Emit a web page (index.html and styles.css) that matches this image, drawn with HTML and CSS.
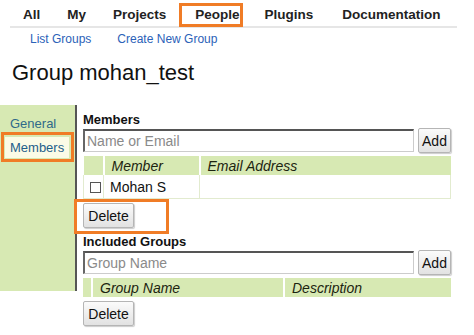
FILE: index.html
```html
<!DOCTYPE html>
<html lang="en">
<head>
    <meta charset="UTF-8">
    <title>Group mohan_test</title>
    <link rel="stylesheet" href="styles.css">
</head>
<body>
    <div class="topnav">
        <a class="nav-item">All</a>
        <a class="nav-item">My</a>
        <a class="nav-item">Projects</a>
        <a class="nav-item marked">People</a>
        <a class="nav-item">Plugins</a>
        <a class="nav-item">Documentation</a>
    </div>
    <div class="subnav">
        <a>List Groups</a>
        <a>Create New Group</a>
    </div>
    <h1 class="title">Group mohan_test</h1>

    <div class="layout">
        <div class="sidebar">
            <a class="side-link">General</a>
            <a class="side-link active">Members</a>
        </div>
        <div class="main">
            <div class="section-title">Members</div>
            <div class="add-row">
                <input class="text-input" type="text" placeholder="Name or Email">
                <button class="btn">Add</button>
            </div>
            <table class="grid">
                <tr>
                    <th class="check-col"></th>
                    <th class="member-col">Member</th>
                    <th>Email Address</th>
                </tr>
                <tr>
                    <td class="check-cell"><span class="checkbox"></span></td>
                    <td class="name-cell">Mohan S</td>
                    <td></td>
                </tr>
            </table>
            <div class="delete-row marked-box">
                <button class="btn">Delete</button>
            </div>

            <div class="section-title">Included Groups</div>
            <div class="add-row">
                <input class="text-input" type="text" placeholder="Group Name">
                <button class="btn">Add</button>
            </div>
            <table class="grid">
                <tr>
                    <th class="narrow-col"></th>
                    <th class="group-col">Group Name</th>
                    <th>Description</th>
                </tr>
            </table>
            <div class="delete-row">
                <button class="btn">Delete</button>
            </div>
        </div>
    </div>
</body>
</html>
```

FILE: styles.css
```css
body {
    font-family: "Liberation Sans", Arial, sans-serif;
    margin: 0;
    background-color: #fff;
    color: #111;
}
a {
    cursor: pointer;
}
.topnav {
    display: flex;
    margin: 0 17px 0 10px;
    padding-top: 4px;
    height: 22px;
    border-bottom: 2px solid #e6e6e6;
    align-items: center;
}
.nav-item {
    display: block;
    font-size: 13.5px;
    line-height: 16px;
    font-weight: bold;
    color: #222;
    padding: 0 13px;
    margin-right: 1px;
}
.nav-item:nth-child(3) {
    margin-right: 0;
}
.nav-item:nth-child(4) {
    padding: 0 11px 0 16px;
}
.nav-item:nth-child(5) {
    margin-right: 3px;
}
.marked {
    position: relative;
}
/* orange annotation frame */
.marked::after {
    content: "";
    position: absolute;
    left: 0;
    right: 8px;
    top: -4px;
    bottom: -4px;
    border: 3px solid #f07c26;
}
.subnav {
    display: flex;
    gap: 26px;
    padding: 4px 0 0 30px;
    font-size: 12px;
    height: 16px;
}
.subnav a {
    color: #2b62b8;
}
.title {
    font-size: 22px;
    font-weight: normal;
    margin: 12px 0 0 12px;
    color: #111;
    height: 45px;
}
.layout {
    display: flex;
    align-items: flex-start;
}
.sidebar {
    width: 77px;
    height: 186px;
    background-color: #d7e9b3;
    border-right: 2px solid #555;
    padding-top: 9px;
    box-sizing: border-box;
    display: flex;
    flex-direction: column;
}
.side-link {
    font-size: 13px;
    color: #2f6a8a;
    padding: 2px 0 2px 10px;
}
.side-link.active {
    position: relative;
    background-color: #fbfbe6;
    margin: 4px 6px 0 5px;
    padding: 3px 0 3px 5px;
    color: #1f5f8a;
}
.side-link.active::after {
    content: "";
    position: absolute;
    left: -4px;
    right: -5px;
    top: -5px;
    bottom: -4px;
    border: 3px solid #f07c26;
}
.main {
    margin-left: 6px;
    width: 368px;
    padding-top: 7px;
}
.section-title {
    font-size: 13px;
    font-weight: bold;
    color: #111;
    height: 16px;
}
.add-row {
    display: flex;
    align-items: center;
    gap: 4px;
}
.text-input {
    width: 331px;
    height: 23px;
    box-sizing: border-box;
    border: 1px solid #ccc;
    border-top: 2px solid #555;
    border-left: 2px solid #666;
    font-family: "Liberation Sans", Arial, sans-serif;
    font-size: 14px;
    padding: 0 2px;
    margin: 0;
}
.text-input::placeholder {
    color: #8a8a8a;
}
.btn {
    font-family: "Liberation Sans", Arial, sans-serif;
    font-size: 14px;
    color: #111;
    height: 25px;
    padding: 0 5px;
    border: 1px solid #b5b5b5;
    border-radius: 2px;
    background: linear-gradient(#fbfbfb, #e2e2e2);
    box-shadow: 1px 1px 1px rgba(0, 0, 0, 0.2);
    margin: 0;
}
.add-row .btn {
    width: 33px;
    padding: 0;
}
.grid {
    width: 368px;
    table-layout: fixed;
    border-collapse: collapse;
    margin-top: 3px;
    font-size: 14px;
}
.grid th {
    background-color: #d7e9b3;
    font-style: italic;
    font-weight: normal;
    text-align: left;
    height: 19px;
    padding: 0 0 0 7px;
    border-left: 2px solid #fff;
    color: #1c2410;
}
.grid th:first-child {
    border-left: none;
}
.grid td {
    height: 23px;
    padding: 0;
    border: 1px solid #e2ebcf;
    border-top: none;
}
.check-col {
    width: 12px;
}
.grid th.member-col {
    width: 87px;
}
.narrow-col {
    width: 1px;
}
.grid th.group-col {
    width: 183px;
}
.grid td.check-cell {
    padding-left: 6px;
}
.grid td.name-cell {
    padding-left: 6px;
}
.checkbox {
    display: inline-block;
    width: 9px;
    height: 9px;
    border: 1px solid #555;
    background-color: #fff;
    vertical-align: middle;
}
.delete-row {
    padding: 4px 0 0 0;
    height: 31px;
}
.delete-row .btn {
    width: 51px;
    padding: 0;
}
.marked-box {
    position: relative;
}
.marked-box::after {
    content: "";
    position: absolute;
    left: -9px;
    top: 0;
    width: 89px;
    height: 29px;
    border: 3px solid #f07c26;
}
```
